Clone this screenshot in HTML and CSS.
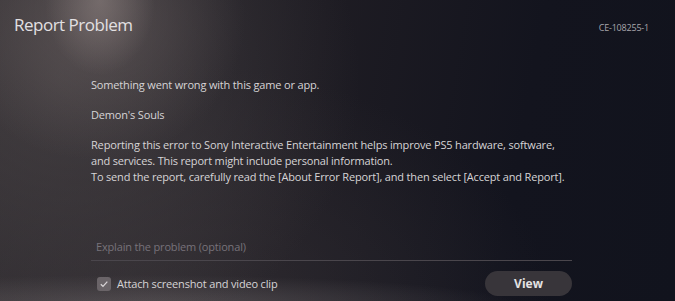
FILE: index.html
```html
<!DOCTYPE html>
<html lang="en">
<head>
    <meta charset="UTF-8">
    <meta name="viewport" content="width=device-width, initial-scale=1.0">
    <title>Report Problem</title>
    <link rel="stylesheet" href="styles.css">
</head>
<body>
    <div class="screen">
        <div class="header">
            <h1 class="title">Report Problem</h1>
            <span class="code">CE-108255-1</span>
        </div>

        <div class="content">
            <p class="line">Something went wrong with this game or app.</p>
            <p class="line">Demon's Souls</p>
            <p class="line">Reporting this error to Sony Interactive Entertainment helps improve PS5 hardware, software,<br>and services. This report might include personal information.<br>To send the report, carefully read the [About Error Report], and then select [Accept and Report].</p>

            <div class="field">Explain the problem (optional)</div>

            <div class="bottom">
                <label class="check">
                    <span class="box">
                        <svg width="10" height="10" viewBox="0 0 10 10"><path d="M1.8 5.2 L4 7.4 L8.3 2.6" fill="none" stroke="#d8d4d6" stroke-width="1.3"/></svg>
                    </span>
                    Attach screenshot and video clip
                </label>
                <button class="view">View</button>
            </div>
        </div>
    </div>
</body>
</html>
```

FILE: styles.css
```css
body {
    margin: 0;
    background: #12141e;
}

.screen {
    width: 675px;
    height: 301px;
    overflow: hidden;
    font-family: "Open Sans", "Liberation Sans", sans-serif;
    color: #d6d4d6;
    background:
        radial-gradient(ellipse 55px 75px at 100px 0px, rgba(150, 138, 136, 0.5), rgba(150, 138, 136, 0) 100%),
        radial-gradient(ellipse 150px 140px at 95px 20px, rgba(110, 100, 100, 0.55), rgba(110, 100, 100, 0) 100%),
        radial-gradient(ellipse 300px 280px at 60px 80px, rgba(80, 74, 76, 0.6), rgba(80, 74, 76, 0) 100%),
        radial-gradient(ellipse 380px 30px at 140px 305px, rgba(120, 114, 116, 0.45), rgba(120, 114, 116, 0) 100%),
        radial-gradient(ellipse 400px 240px at 150px 301px, rgba(58, 53, 57, 0.6), rgba(58, 53, 57, 0) 100%),
        linear-gradient(100deg, #2d2a2e 0%, #1e1c23 45%, #13141e 75%, #11131d 100%);
}

.header {
    display: flex;
    justify-content: space-between;
    align-items: flex-start;
    padding: 14px 26px 0 14px;
}

.title {
    margin: 0;
    font-size: 17px;
    font-weight: 400;
    line-height: 22px;
    color: #e2e0e2;
    letter-spacing: -0.5px;
}

.code {
    font-size: 9px;
    margin-top: 7px;
    color: #a8a6ac;
    letter-spacing: -0.2px;
}

.content {
    width: 481px;
    margin: 41px 0 0 91px;
}

.line {
    margin: 0 0 14px;
    font-size: 11px;
    line-height: 16px;
    letter-spacing: -0.17px;
}

.field {
    margin-top: 54px;
    padding: 0 0 5px 5px;
    font-size: 11px;
    line-height: 16px;
    color: #77727a;
    letter-spacing: -0.17px;
    border-bottom: 1px solid #4a464c;
}

.bottom {
    display: flex;
    justify-content: space-between;
    align-items: center;
    margin-top: 10px;
}

.check {
    display: flex;
    align-items: center;
    gap: 6px;
    padding-left: 6px;
    font-size: 11px;
    letter-spacing: -0.17px;
}

.box {
    width: 14px;
    height: 14px;
    border-radius: 3px;
    background: #6a6468;
    display: flex;
    align-items: center;
    justify-content: center;
}

.view {
    width: 87px;
    height: 25px;
    border: none;
    border-radius: 13px;
    background: #38353a;
    color: #e4e2e4;
    font-family: "Open Sans", "Liberation Sans", sans-serif;
    font-weight: 700;
    font-size: 12px;
}
```
